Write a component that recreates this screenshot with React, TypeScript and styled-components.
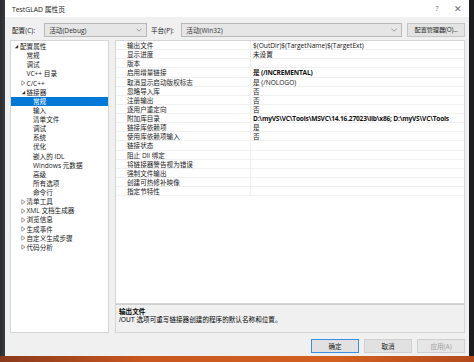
import * as React from 'react'
import styled, { createGlobalStyle } from 'styled-components'

const Global = createGlobalStyle`
  html, body { margin: 0; padding: 0; }
  body {
    width: 474px;
    height: 362px;
    overflow: hidden;
    background: #1f1f22;
    font-family: "Open Sans", "Noto Sans CJK SC", sans-serif;
    font-size: 6.6px;
    color: #000;
  }
`

const Screen = styled.div`
  width: 474px;
  height: 362px;
  display: grid;
  grid-template-rows: 356px 6px;
  background: linear-gradient(90deg, #2a2b2f 0, #3a3b40 5px, #1b1b1d 5px);
`

const Row = styled.div`
  display: flex;
  padding-left: 5px;
`

const Taskbar = styled.div`
  background: linear-gradient(90deg, #8a3a1c, #c9561f 30%, #d3601f 70%, #b44a1c);
`

const RightEdge = styled.div`
  width: 5px;
  background: #1c1c1e;
`

const Dialog = styled.div`
  width: 464px;
  height: 356px;
  display: flex;
  flex-direction: column;
  background: #f0f0f0;
`

const TitleBar = styled.div`
  height: 17px;
  flex: none;
  background: #fff;
  display: flex;
  align-items: center;
  padding: 0 0 0 7px;
  font-size: 6.8px;
  color: #1a1a1a;
`

const Title = styled.span`
  flex: 1;
`

const TitleBtn = styled.span<{ $w: number }>`
  width: ${p => p.$w}px;
  text-align: center;
  color: #666;
  font-size: ${p => (p.$w > 20 ? 9 : 7)}px;
`

const Body = styled.div`
  flex: 1;
  display: flex;
  flex-direction: column;
  padding: 5px 4px 3px 5px;
`

const ConfigRow = styled.div`
  height: 15px;
  display: flex;
  align-items: center;
`

const Label = styled.span<{ $w: number; $pad?: number }>`
  width: ${p => p.$w}px;
  padding-left: ${p => p.$pad ?? 2}px;
  white-space: nowrap;
  color: #222;
`

const Combo = styled.div<{ $w: number }>`
  width: ${p => p.$w}px;
  height: 14px;
  box-sizing: border-box;
  border: 1px solid #b8b8b8;
  background: #e6e6e6;
  display: flex;
  align-items: center;
  padding: 0 4px 0 4px;
  color: #333;
`

const ComboText = styled.span`
  flex: 1;
`

const SmallBtn = styled.div`
  margin-left: 5px;
  width: 59px;
  height: 14px;
  box-sizing: border-box;
  border: 1px solid #c6c6c6;
  background: #e3e3e3;
  display: flex;
  align-items: center;
  justify-content: center;
  white-space: nowrap;
  font-size: 6.2px;
  letter-spacing: -0.1px;
  color: #222;
`

const Main = styled.div`
  margin-top: 3px;
  display: grid;
  grid-template-columns: 99px 350px;
  column-gap: 6px;
  height: 293px;
`

const Tree = styled.div`
  box-sizing: border-box;
  border: 1px solid #d5d5d5;
  background: #fff;
  padding-top: 1px;
`

const TreeItem = styled.div<{ $level: number; $sel?: boolean }>`
  height: 9.14px;
  line-height: 9.14px;
  display: flex;
  align-items: center;
  padding-left: ${p => 3 + p.$level * 6.5}px;
  background: ${p => (p.$sel ? '#0078d7' : 'transparent')};
  color: ${p => (p.$sel ? '#fff' : '#1a1a1a')};
  white-space: nowrap;
`

const Toggle = styled.span`
  width: 6px;
  display: inline-flex;
  align-items: center;
`

const RightCol = styled.div`
  display: grid;
  grid-template-rows: 264px 29px;
`

const Grid = styled.div`
  box-sizing: border-box;
  border: 1px solid #d5d5d5;
  background: #fff;
  overflow: hidden;
`

const PropRow = styled.div`
  height: 9.14px;
  line-height: 9px;
  display: grid;
  grid-template-columns: 135px 1fr;
  box-sizing: border-box;
  border-bottom: 1px solid #f0f0f0;
  white-space: nowrap;
`

const PropName = styled.span`
  padding-left: 11px;
  color: #1a1a1a;
  border-right: 1px solid #f0f0f0;
`

const PropValue = styled.span<{ $bold?: boolean }>`
  padding-left: 2px;
  font-weight: ${p => (p.$bold ? 700 : 400)};
  letter-spacing: ${p => (p.$bold ? '-0.2px' : '0')};
  color: #111;
  overflow: hidden;
`

const Desc = styled.div`
  box-sizing: border-box;
  border: 1px solid #d5d5d5;
  border-top: 1px solid #cfcfcf;
  background: #f0f0f0;
  padding: 3px 3px;
  font-family: "Liberation Sans", "Noto Sans CJK SC", sans-serif;
  line-height: 8px;
  white-space: nowrap;
`

const DescTitle = styled.div`
  font-weight: 700;
`

const Buttons = styled.div`
  margin-top: 6px;
  display: flex;
  justify-content: flex-end;
  gap: 5px;
`

const Button = styled.div<{ $primary?: boolean; $disabled?: boolean }>`
  width: 48px;
  height: 14px;
  box-sizing: border-box;
  border: 1px solid ${p => (p.$primary ? '#3a8ee6' : '#cfcfcf')};
  background: ${p => (p.$disabled ? '#e6e6e6' : '#e1e1e1')};
  color: ${p => (p.$disabled ? '#a0a0a0' : '#222')};
  display: flex;
  align-items: center;
  justify-content: center;
`

const Chevron = () => (
  <svg width="6" height="4" viewBox="0 0 6 4">
    <path d="M0.5 0.8 L3 3.2 L5.5 0.8" fill="none" stroke="#888" strokeWidth="0.8" />
  </svg>
)

const Expanded = () => (
  <svg width="5" height="5" viewBox="0 0 5 5">
    <path d="M4.2 0.8 L4.2 4.2 L0.8 4.2 Z" fill="#333" />
  </svg>
)

const Collapsed = () => (
  <svg width="5" height="6" viewBox="0 0 5 6">
    <path d="M0.8 0.8 L4 3 L0.8 5.2 Z" fill="none" stroke="#777" strokeWidth="0.7" />
  </svg>
)

type Node = { text: string; level: number; toggle?: 'open' | 'closed'; sel?: boolean }

const tree: Node[] = [
  { text: '配置属性', level: 0, toggle: 'open' },
  { text: '常规', level: 1 },
  { text: '调试', level: 1 },
  { text: 'VC++ 目录', level: 1 },
  { text: 'C/C++', level: 1, toggle: 'closed' },
  { text: '链接器', level: 1, toggle: 'open' },
  { text: '常规', level: 2, sel: true },
  { text: '输入', level: 2 },
  { text: '清单文件', level: 2 },
  { text: '调试', level: 2 },
  { text: '系统', level: 2 },
  { text: '优化', level: 2 },
  { text: '嵌入的 IDL', level: 2 },
  { text: 'Windows 元数据', level: 2 },
  { text: '高级', level: 2 },
  { text: '所有选项', level: 2 },
  { text: '命令行', level: 2 },
  { text: '清单工具', level: 1, toggle: 'closed' },
  { text: 'XML 文档生成器', level: 1, toggle: 'closed' },
  { text: '浏览信息', level: 1, toggle: 'closed' },
  { text: '生成事件', level: 1, toggle: 'closed' },
  { text: '自定义生成步骤', level: 1, toggle: 'closed' },
  { text: '代码分析', level: 1, toggle: 'closed' },
]

const props: [string, string, boolean?][] = [
  ['输出文件', '$(OutDir)$(TargetName)$(TargetExt)'],
  ['显示进度', '未设置'],
  ['版本', ''],
  ['启用增量链接', '是 (/INCREMENTAL)', true],
  ['取消显示启动版权标志', '是 (/NOLOGO)'],
  ['忽略导入库', '否'],
  ['注册输出', '否'],
  ['逐用户重定向', '否'],
  ['附加库目录', 'D:\\myVS\\VC\\Tools\\MSVC\\14.16.27023\\lib\\x86; D:\\myVS\\VC\\Tools', true],
  ['链接库依赖项', '是'],
  ['使用库依赖项输入', '否'],
  ['链接状态', ''],
  ['阻止 Dll 绑定', ''],
  ['将链接器警告视为错误', ''],
  ['强制文件输出', ''],
  ['创建可热修补映像', ''],
  ['指定节特性', ''],
]

export default function App() {
  return (
    <>
      <Global />
      <Screen>
        <Row>
          <Dialog>
            <TitleBar>
              <Title>TestGLAD 属性页</Title>
              <TitleBtn $w={20}>?</TitleBtn>
              <TitleBtn $w={22}>✕</TitleBtn>
            </TitleBar>
            <Body>
              <ConfigRow>
                <Label $w={33}>配置(C):</Label>
                <Combo $w={105}>
                  <ComboText>活动(Debug)</ComboText>
                  <Chevron />
                </Combo>
                <Label $w={31} $pad={4}>平台(P):</Label>
                <Combo $w={226}>
                  <ComboText>活动(Win32)</ComboText>
                  <Chevron />
                </Combo>
                <SmallBtn>配置管理器(O)...</SmallBtn>
              </ConfigRow>
              <Main>
                <Tree>
                  {tree.map((n, i) => (
                    <TreeItem key={i} $level={n.level} $sel={n.sel}>
                      <Toggle>
                        {n.toggle === 'open' && <Expanded />}
                        {n.toggle === 'closed' && <Collapsed />}
                      </Toggle>
                      {n.text}
                    </TreeItem>
                  ))}
                </Tree>
                <RightCol>
                  <Grid>
                    {props.map(([name, value, bold], i) => (
                      <PropRow key={i}>
                        <PropName>{name}</PropName>
                        <PropValue $bold={bold}>{value}</PropValue>
                      </PropRow>
                    ))}
                  </Grid>
                  <Desc>
                    <DescTitle>输出文件</DescTitle>
                    <div>/OUT 选项可重写链接器创建的程序的默认名称和位置。</div>
                  </Desc>
                </RightCol>
              </Main>
              <Buttons>
                <Button $primary>确定</Button>
                <Button>取消</Button>
                <Button $disabled>应用(A)</Button>
              </Buttons>
            </Body>
          </Dialog>
          <RightEdge />
        </Row>
        <Taskbar />
      </Screen>
    </>
  )
}
